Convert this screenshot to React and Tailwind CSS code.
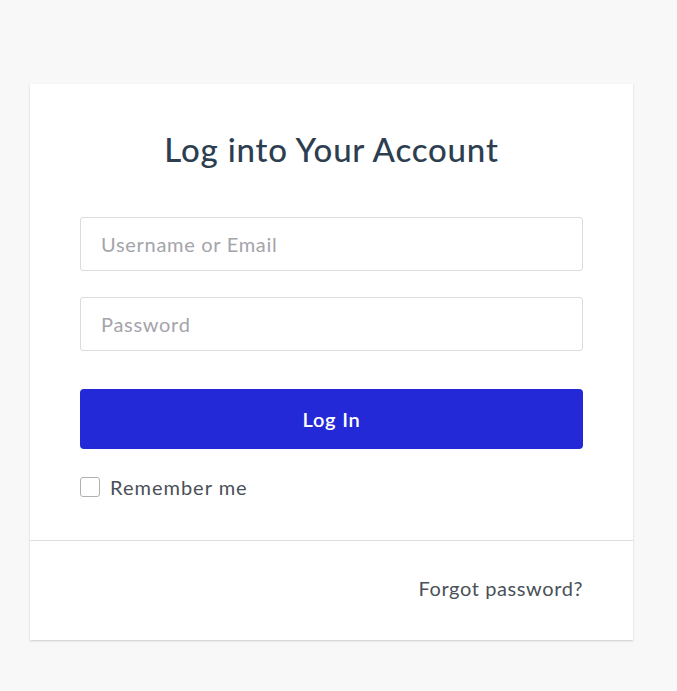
import React, { useState } from 'react';

const App = () => {
  const [remember, setRemember] = useState(false);
  return (
    <div className="min-h-screen bg-[#f8f8f8] pt-[84px] pl-[30px]" style={{ fontFamily: 'Lato, "Open Sans", sans-serif' }}>
      <div className="w-[603px] bg-white shadow-[0_1px_2px_rgba(0,0,0,0.18)]">
        <div className="px-[50px] pt-[46px] pb-[43px]">
          <h1 className="text-center text-[33px] leading-[38px] tracking-[0.8px] text-[#2c3e50] font-medium">Log into Your Account</h1>
          <div className="mt-[49px] space-y-[26px]">
            <input
              type="text"
              placeholder="Username or Email"
              className="block w-full h-[54px] border border-[#dcdcdc] rounded-[3px] px-[20px] text-[20px] tracking-[0.7px] text-[#444] placeholder:text-[#a4a4ab] outline-none"
            />
            <input
              type="password"
              placeholder="Password"
              className="block w-full h-[54px] border border-[#dcdcdc] rounded-[3px] px-[20px] text-[20px] tracking-[0.7px] text-[#444] placeholder:text-[#a4a4ab] outline-none"
            />
          </div>
          <button className="mt-[38px] w-full h-[60px] rounded-[4px] bg-[#2329d6] text-white text-[20px] tracking-[0.8px] font-semibold">Log In</button>
          <label className="mt-[28px] flex items-center gap-[10px] text-[20px] leading-[20px] tracking-[1px] text-[#4a5058] cursor-pointer">
            <span
              onClick={() => setRemember(!remember)}
              className="w-[20px] h-[20px] border border-[#b0b0b0] rounded-[3px] bg-white flex items-center justify-center text-[13px] text-[#2329d6]"
            >{remember ? '✓' : ''}</span>
            Remember me
          </label>
        </div>
        <div className="border-t border-[#dddddd] px-[50px] pt-[34px] pb-[39px] flex justify-end">
          <a href="#" className="text-[20px] leading-[26px] tracking-[0.6px] text-[#4a5058]">Forgot password?</a>
        </div>
      </div>
    </div>
  );
};

export default App;
